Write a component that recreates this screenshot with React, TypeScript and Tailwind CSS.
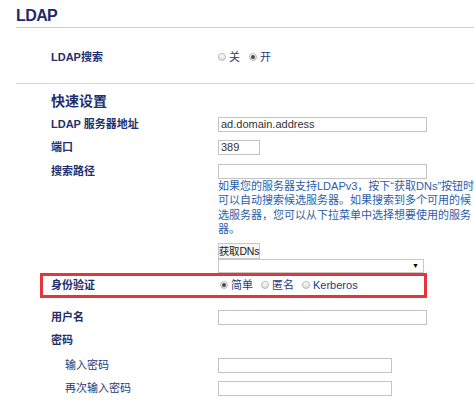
import React from "react";

const FONT = {
  fontFamily: '"Liberation Sans", "Noto Sans CJK SC", sans-serif',
};

function Radio({ checked = false }: { checked?: boolean }) {
  return (
    <span className="relative inline-flex h-[8px] w-[8px] shrink-0 items-center justify-center rounded-full border border-[#b8b8b8] bg-gradient-to-b from-white to-[#dcdcdc]">
      {checked && <span className="h-[4px] w-[4px] rounded-full bg-[#4a4a4a]" />}
    </span>
  );
}

function RadioOption({ label, checked = false }: { label: string; checked?: boolean }) {
  return (
    <span className="inline-flex items-center">
      <Radio checked={checked} />
      <span className="ml-[3px] text-[11px] leading-[15px] text-[#263a7c]">{label}</span>
    </span>
  );
}

function Field({ w, value = "" }: { w: string; value?: string }) {
  return (
    <div
      className={`${w} h-[15px] border border-[#c4c4c4] bg-white px-[2px] text-[11px] leading-[13px] text-[#333]`}
    >
      {value}
    </div>
  );
}

function Row({
  label,
  children,
  indent = false,
  className = "",
}: {
  label: string;
  children?: React.ReactNode;
  indent?: boolean;
  className?: string;
}) {
  return (
    <div className={`flex h-[15px] items-center pl-[51px] ${className}`}>
      <div
        className={`w-[167px] shrink-0 text-[11px] leading-[15px] ${
          indent ? "pl-[14px] font-normal text-[#26377a]" : "font-bold text-[#1f2f6e]"
        }`}
      >
        {label}
      </div>
      {children}
    </div>
  );
}

export default function App() {
  return (
    <div className="relative h-[406px] w-[474px] overflow-hidden bg-white" style={FONT}>
      {/* page title */}
      <div className="ml-4 h-[28px] border-b border-[#cfcfcf] pt-[6px]">
        <h1 className="text-[16px] font-bold leading-[19px] tracking-[-0.6px] text-[#1e2a6e]">LDAP</h1>
      </div>

      {/* LDAP search on/off */}
      <div className="ml-4 flex h-[56px] items-center border-b border-[#d4d4d4] pt-[3px]">
        <div className="flex w-full items-center pl-[35px]">
          <div className="w-[167px] shrink-0 text-[11px] font-bold text-[#1f2f6e]">LDAP搜索</div>
          <div className="flex items-center gap-[9px]">
            <RadioOption label="关" />
            <RadioOption label="开" checked />
          </div>
        </div>
      </div>

      {/* quick setup */}
      <div className="pl-[51px] pt-[6px]">
        <h2 className="h-[22px] text-[14px] font-bold leading-[22px] text-[#1f2f6e]">快速设置</h2>
      </div>

      <Row label="LDAP 服务器地址" className="mt-[5px]">
        <Field w="w-[209px]" value="ad.domain.address" />
      </Row>
      <Row label="端口" className="mt-[8px]">
        <Field w="w-[42px]" value="389" />
      </Row>
      <Row label="搜索路径" className="mt-[9px]">
        <Field w="w-[209px]" />
      </Row>

      <div className="pl-[218px] text-[11px] leading-[14.4px] text-[#2b5ea7]">
        <div className="whitespace-nowrap">如果您的服务器支持LDAPv3，按下“获取DNs”按钮时</div>
        <div className="whitespace-nowrap">可以自动搜索候选服务器。如果搜索到多个可用的候</div>
        <div className="whitespace-nowrap">选服务器，您可以从下拉菜单中选择想要使用的服务</div>
        <div className="whitespace-nowrap">器。</div>

        <button className="mt-[6px] flex h-[16px] w-[42px] items-center justify-center whitespace-nowrap border border-[#c8c8c8] bg-[#f6f6f6] px-0 text-[10.5px] leading-[14px] tracking-[-0.2px] text-[#222]">
          获取DNs
        </button>
        <div className="flex h-[14px] w-[206px] items-center justify-end border border-[#c8c8c8] bg-white pr-[4px]">
          <span className="text-[7px] leading-none text-black">▼</span>
        </div>
      </div>

      {/* authentication method */}
      <div className="ml-[40px] flex h-[25px] w-[387px] items-center border-[3px] border-[#e5343a] pl-[8px]">
        <div className="w-[167px] shrink-0 text-[11px] font-bold text-[#1f2f6e]">身份验证</div>
        <div className="ml-[2px] flex items-center gap-[8px]">
          <RadioOption label="简单" checked />
          <RadioOption label="匿名" />
          <RadioOption label="Kerberos" />
        </div>
      </div>

      <Row label="用户名" className="mt-[12px]">
        <Field w="w-[209px]" />
      </Row>
      <Row label="密码" className="mt-[8px]" />
      <Row label="输入密码" indent className="mt-[10px]">
        <Field w="w-[174px]" />
      </Row>
      <Row label="再次输入密码" indent className="mt-[8px]">
        <Field w="w-[174px]" />
      </Row>
    </div>
  );
}
